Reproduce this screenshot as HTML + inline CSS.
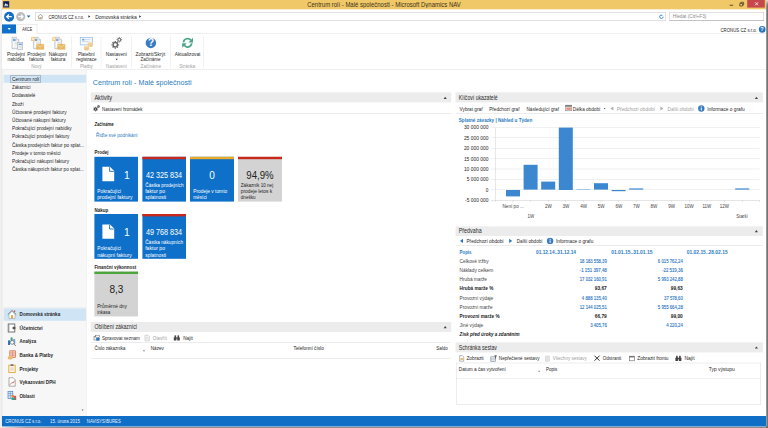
<!DOCTYPE html>
<html lang="cs"><head><meta charset="utf-8"><title>Centrum rolí - Malé společnosti - Microsoft Dynamics NAV</title>
<style>
html,body{margin:0;padding:0;background:#ededed;overflow:hidden;}
body{width:768px;height:428px;position:relative;font-family:"Liberation Sans",sans-serif;}
#w{position:absolute;left:0;top:0;width:1920px;height:1070px;transform:scale(.4);transform-origin:0 0;overflow:hidden;background:linear-gradient(to right,#efefef 0,#efefef 40%,#b9b9b9 100%);}
#w div,#w svg{position:absolute;}
#w .t{white-space:nowrap;line-height:1.15;}
#w svg{overflow:visible;}
</style></head><body><div id="w">
<div style="left:0px;top:0px;width:1920px;height:1070px;background:#f0f0f0;"></div>
<div style="left:3.5px;top:0px;width:2px;height:1066px;background:#e2e2e2;"></div>
<div style="left:1915px;top:0px;width:5px;height:1070px;background:linear-gradient(to right,#a6a6a6,#646464);"></div>
<div style="left:1915px;top:0px;width:5px;height:12.5px;background:linear-gradient(to bottom,#e0e0e0,rgba(224,224,224,0));"></div>
<div style="left:7.5px;top:1065.5px;width:1907.5px;height:4.5px;background:linear-gradient(to right,#e4e4e4 0,#a0a0a0 3%,#8c8c8c 8%,#8c8c8c 100%);"></div>
<div style="left:1915px;top:1065px;width:5px;height:5px;background:#707070;"></div>
<div style="left:5px;top:0px;width:1910px;height:1065.5px;background:#fff;"></div>
<div style="left:5px;top:0px;width:1910px;height:23px;background:#f1c867;"></div>
<div class="t" style="font-size: 16px; color: rgb(58, 51, 32); left: 710px; width: 500px; text-align: center; transform-origin: 50% 50%; top: 3px; transform: scaleX(0.933);"><span>Centrum rolí - Malé společnosti - Microsoft Dynamics NAV</span></div>
<svg style="left:7.75px;top:3.25px;width:15px;height:15.75px" viewBox="0 0 6 6.3"><rect x="0" y="0" width="6" height="6.3" fill="#0d215c"></rect><path d="M0.9 4.6 L2.4 1.9 L3.2 3.3 L3.9 2.6 L5.2 4.6 Z" fill="#e9edf6"></path><rect x="0.9" y="4.7" width="4.3" height="0.5" fill="#8fa0c8"></rect></svg>
<div style="left:1868.25px;top:0px;width:44px;height:19.25px;background:#c7484c;"></div>
<svg style="left:1886.5px;top:4.75px;width:9px;height:9px" viewBox="0 0 3.6 3.6"><path d="M0.3 0.3 L3.3 3.3 M3.3 0.3 L0.3 3.3" stroke="#fff" stroke-width="0.8" fill="none"></path></svg>
<svg style="left:1848.25px;top:3.75px;width:12.5px;height:12.5px" viewBox="0 0 5 5"><path d="M0.6 1.8 H3.4 V4.4 H0.6 Z M1.6 1.8 V0.7 H4.4 V3.3 H3.4" stroke="#3a3320" stroke-width="0.7" fill="none"></path></svg>
<div style="left:1824px;top:11.5px;width:9px;height:2.5px;background:#3a3320;"></div>
<div style="left:5px;top:23px;width:1910px;height:1.25px;background:#f7e7b8;"></div>
<svg style="left:10px;top:28.5px;width:25.5px;height:25.5px" viewBox="0 0 10.2 10.2"><circle cx="5.1" cy="5.1" r="5" fill="#136bc4"></circle><path d="M7.8 5.1 H2.8 M4.9 2.9 L2.7 5.1 L4.9 7.3" stroke="#fff" stroke-width="1.3" fill="none"></path></svg>
<svg style="left:39.5px;top:29.5px;width:23.5px;height:23.5px" viewBox="0 0 9.4 9.4"><circle cx="4.7" cy="4.7" r="4.6" fill="#bdbdbd"></circle><path d="M2.2 4.7 H6.9 M5 2.7 L7 4.7 L5 6.7" stroke="#fff" stroke-width="1.2" fill="none"></path></svg>
<svg style="left:67px;top:38.5px;width:9px;height:6px" viewBox="0 0 3.6 2.4"><path d="M0 0 H3.6 L1.8 2.2 Z" fill="#136bc4"></path></svg>
<div style="left:88.25px;top:31px;width:1576px;height:20.5px;background:#fff;"></div>
<div style="left:88.25px;top:31px;width:1576px;height:1.12px;background:#b4b4b4;"></div>
<div style="left:88.25px;top:50.38px;width:1576px;height:1.12px;background:#b4b4b4;"></div>
<div style="left:88.25px;top:31px;width:1.12px;height:20.5px;background:#b4b4b4;"></div>
<div style="left:1663.12px;top:31px;width:1.12px;height:20.5px;background:#b4b4b4;"></div>
<svg style="left:94px;top:34px;width:14px;height:14px" viewBox="0 0 5.6 5.6"><path d="M0.4 3 L2.8 0.6 L5.2 3 M1.1 2.8 V5.2 H4.5 V2.8" stroke="#777" stroke-width="0.7" fill="#fff"></path><rect x="2.2" y="3.4" width="1.2" height="1.8" fill="#e8a33a"></rect></svg>
<div class="t" style="font-size: 13px; color: rgb(38, 38, 38); left: 120.75px; transform-origin: 0px 50%; top: 36px; transform: scaleX(0.818);"><span>CRONUS CZ s.r.o.</span></div>
<svg style="left:221.25px;top:38.25px;width:5.5px;height:6.5px" viewBox="0 0 2.2 2.6"><path d="M0 0 L2 1.3 L0 2.6 Z" fill="#333"></path></svg>
<div class="t" style="font-size: 13px; color: rgb(38, 38, 38); left: 237.5px; transform-origin: 0px 50%; top: 36px; transform: scaleX(0.966);"><span>Domovská stránka</span></div>
<svg style="left:348.25px;top:38.25px;width:5.5px;height:6.5px" viewBox="0 0 2.2 2.6"><path d="M0 0 L2 1.3 L0 2.6 Z" fill="#333"></path></svg>
<svg style="left:1648px;top:35.5px;width:11.5px;height:11.5px" viewBox="0 0 4.6 4.6"><path d="M3.9 2.3 A1.7 1.7 0 1 1 2.3 0.7" stroke="#3a7fc9" stroke-width="0.9" fill="none"></path><path d="M2.1 0 L3.6 0.8 L2.1 1.7 Z" fill="#3a7fc9"></path></svg>
<div style="left:1673.5px;top:30px;width:236.5px;height:21.5px;background:#fff;"></div>
<div style="left:1673.5px;top:30px;width:236.5px;height:1.25px;background:#b4b4b4;"></div>
<div style="left:1673.5px;top:50.25px;width:236.5px;height:1.25px;background:#b4b4b4;"></div>
<div style="left:1673.5px;top:30px;width:1.25px;height:21.5px;background:#b4b4b4;"></div>
<div style="left:1908.75px;top:30px;width:1.25px;height:21.5px;background:#b4b4b4;"></div>
<div class="t" style="font-size: 13px; color: rgb(138, 138, 138); left: 1682px; transform-origin: 0px 50%; top: 34px; transform: scaleX(0.905);"><span>Hledat (Ctrl+F3)</span></div>
<div style="left:5px;top:60.5px;width:35px;height:23.5px;background:#0e70c8;"></div>
<svg style="left:19px;top:69.75px;width:8px;height:5.5px" viewBox="0 0 3.2 2.2"><path d="M0 0 H3.2 L1.6 2 Z" fill="#fff"></path></svg>
<div style="left:5px;top:83.5px;width:1910px;height:1.25px;background:#d4d4d4;"></div>
<div style="left:41.5px;top:61px;width:52px;height:24px;background:#fff;"></div>
<div style="left:41.5px;top:61px;width:52px;height:1.12px;background:#d0d0d0;"></div>
<div style="left:41.5px;top:83.88px;width:52px;height:1.12px;background:#d0d0d0;"></div>
<div style="left:41.5px;top:61px;width:1.12px;height:24px;background:#d0d0d0;"></div>
<div style="left:92.38px;top:61px;width:1.12px;height:24px;background:#d0d0d0;"></div>
<div style="left:42.62px;top:83px;width:49.75px;height:2.25px;background:#fff;"></div>
<div class="t" style="font-size: 13px; color: rgb(34, 34, 34); left: -182.5px; width: 500px; text-align: center; transform-origin: 50% 50%; top: 66px; transform: scaleX(0.692);"><span>AKCE</span></div>
<div class="t" style="font-size: 13px; color: rgb(38, 38, 38); left: 1391.5px; width: 500px; text-align: right; transform-origin: 100% 50%; top: 69px; transform: scaleX(0.834);"><span>CRONUS CZ s.r.o.</span></div>
<svg style="left:1896.5px;top:65px;width:17px;height:17px" viewBox="0 0 6.8 6.8"><circle cx="3.4" cy="3.4" r="3.3" fill="#2c74c0"></circle></svg>
<div class="t" style="font-size:14px;color:#fff;font-weight:bold;left:1655px;width:500px;text-align:center;transform-origin:50% 50%;top:64px;transform:scaleX(1);"><span>?</span></div>
<div style="left:5px;top:173.75px;width:1910px;height:1.25px;background:#d6d6d6;"></div>
<div style="left:178px;top:91.25px;width:1px;height:77.5px;background:#dcdcdc;"></div>
<div style="left:251.5px;top:91.25px;width:1px;height:77.5px;background:#dcdcdc;"></div>
<div style="left:328.25px;top:91.25px;width:1px;height:77.5px;background:#dcdcdc;"></div>
<div style="left:425px;top:91.25px;width:1px;height:77.5px;background:#dcdcdc;"></div>
<div style="left:509.25px;top:91.25px;width:1px;height:77.5px;background:#dcdcdc;"></div>
<div class="t" style="font-size: 12px; color: rgb(31, 31, 31); left: -210.5px; width: 500px; text-align: center; transform-origin: 50% 50%; top: 130px; transform: scaleX(1.018);"><span>Prodejní</span></div>
<div class="t" style="font-size: 12px; color: rgb(31, 31, 31); left: -210.5px; width: 500px; text-align: center; transform-origin: 50% 50%; top: 142px; transform: scaleX(0.995);"><span>nabídka</span></div>
<div class="t" style="font-size: 12px; color: rgb(31, 31, 31); left: -158.75px; width: 500px; text-align: center; transform-origin: 50% 50%; top: 130px; transform: scaleX(1.018);"><span>Prodejní</span></div>
<div class="t" style="font-size: 12px; color: rgb(31, 31, 31); left: -158.75px; width: 500px; text-align: center; transform-origin: 50% 50%; top: 142px; transform: scaleX(0.995);"><span>faktura</span></div>
<div class="t" style="font-size: 12px; color: rgb(31, 31, 31); left: -105px; width: 500px; text-align: center; transform-origin: 50% 50%; top: 130px; transform: scaleX(1.035);"><span>Nákupní</span></div>
<div class="t" style="font-size: 12px; color: rgb(31, 31, 31); left: -105px; width: 500px; text-align: center; transform-origin: 50% 50%; top: 142px; transform: scaleX(0.995);"><span>faktura</span></div>
<div class="t" style="font-size: 12px; color: rgb(31, 31, 31); left: -34.5px; width: 500px; text-align: center; transform-origin: 50% 50%; top: 130px; transform: scaleX(0.965);"><span>Platební</span></div>
<div class="t" style="font-size: 12px; color: rgb(31, 31, 31); left: -34.5px; width: 500px; text-align: center; transform-origin: 50% 50%; top: 142px; transform: scaleX(0.968);"><span>registrace</span></div>
<div class="t" style="font-size: 12px; color: rgb(31, 31, 31); left: 41px; width: 500px; text-align: center; transform-origin: 50% 50%; top: 130px; transform: scaleX(0.976);"><span>Nastavení</span></div>
<svg style="left:288.5px;top:146.5px;width:5.5px;height:4px" viewBox="0 0 2.2 1.6"><path d="M0 0 H2.2 L1.1 1.4 Z" fill="#444"></path></svg>
<div class="t" style="font-size: 12px; color: rgb(31, 31, 31); left: 126.25px; width: 500px; text-align: center; transform-origin: 50% 50%; top: 130px; transform: scaleX(1.007);"><span>Zobrazit/Skrýt</span></div>
<div class="t" style="font-size: 12px; color: rgb(31, 31, 31); left: 126.25px; width: 500px; text-align: center; transform-origin: 50% 50%; top: 142px; transform: scaleX(0.937);"><span>Začínáme</span></div>
<div class="t" style="font-size: 12px; color: rgb(31, 31, 31); left: 218.75px; width: 500px; text-align: center; transform-origin: 50% 50%; top: 130px; transform: scaleX(0.989);"><span>Aktualizovat</span></div>
<div class="t" style="font-size: 12px; color: rgb(162, 162, 162); left: -158.75px; width: 500px; text-align: center; transform-origin: 50% 50%; top: 160px; transform: scaleX(0.96);"><span>Nový</span></div>
<div class="t" style="font-size: 12px; color: rgb(162, 162, 162); left: -34px; width: 500px; text-align: center; transform-origin: 50% 50%; top: 160px; transform: scaleX(0.974);"><span>Platby</span></div>
<div class="t" style="font-size: 12px; color: rgb(162, 162, 162); left: 41px; width: 500px; text-align: center; transform-origin: 50% 50%; top: 160px; transform: scaleX(0.953);"><span>Nastavení</span></div>
<div class="t" style="font-size: 12px; color: rgb(162, 162, 162); left: 126.75px; width: 500px; text-align: center; transform-origin: 50% 50%; top: 160px; transform: scaleX(0.956);"><span>Začínáme</span></div>
<div class="t" style="font-size: 12px; color: rgb(162, 162, 162); left: 218.25px; width: 500px; text-align: center; transform-origin: 50% 50%; top: 160px; transform: scaleX(0.967);"><span>Stránka</span></div>
<svg style="left:22px;top:91.5px;width:36px;height:33.75px" viewBox="-2 0 14.4 13.5"><path d="M1.2 0.5 H5.6 L8 2.9 V11.9 H1.2 Z" fill="#f1f2f4" stroke="#a4abb3" stroke-width="0.6"></path><path d="M5.6 0.5 V2.9 H8" fill="#fff" stroke="#a4abb3" stroke-width="0.5"></path><rect x="2.2" y="2" width="2.6" height="2.2" fill="#6fa5dc"></rect><rect x="2.4" y="5.2" width="0.9" height="5" fill="#fff"></rect><rect x="4" y="5.6" width="3" height="0.4" fill="#c3cad2"></rect><rect x="4" y="7" width="3" height="0.4" fill="#c3cad2"></rect><rect x="6.9" y="5.8" width="5" height="7" fill="#f4f5f7" stroke="#a4abb3" stroke-width="0.6"></rect><rect x="7.7" y="6.8" width="3.4" height="1.5" fill="#6fa5dc"></rect><rect x="7.7" y="9.4" width="3.4" height="0.5" fill="#c3cad2"></rect><rect x="7.7" y="10.8" width="3.4" height="0.5" fill="#c3cad2"></rect></svg>
<svg style="left:75.75px;top:91.5px;width:36px;height:33.75px" viewBox="-2 0 14.4 13.5"><path d="M1.2 0.5 H5.6 L8 2.9 V11.9 H1.2 Z" fill="#f1f2f4" stroke="#a4abb3" stroke-width="0.6"></path><path d="M5.6 0.5 V2.9 H8" fill="#fff" stroke="#a4abb3" stroke-width="0.5"></path><rect x="2.2" y="2" width="2.6" height="2.2" fill="#6fa5dc"></rect><rect x="2.4" y="5.2" width="0.9" height="5" fill="#fff"></rect><rect x="4" y="5.6" width="3" height="0.4" fill="#c3cad2"></rect><rect x="4" y="7" width="3" height="0.4" fill="#c3cad2"></rect><rect x="-1.4" y="0.3" width="4.1" height="3.9" fill="#f1cd8e"></rect><rect x="-0.2" y="1.2" width="1.6" height="2.0" fill="#fbeed4"></rect><rect x="3.8" y="7.1" width="7.9" height="5.7" fill="#e8b863"></rect><path d="M3.8 7.3 L7.75 10.4 L11.7 7.3" stroke="#f7e2ba" stroke-width="0.7" fill="none"></path></svg>
<svg style="left:129px;top:91.5px;width:36px;height:33.75px" viewBox="-2 0 14.4 13.5"><path d="M1.2 0.5 H5.6 L8 2.9 V11.9 H1.2 Z" fill="#f1f2f4" stroke="#a4abb3" stroke-width="0.6"></path><path d="M5.6 0.5 V2.9 H8" fill="#fff" stroke="#a4abb3" stroke-width="0.5"></path><rect x="2.2" y="2" width="2.6" height="2.2" fill="#6fa5dc"></rect><rect x="2.4" y="5.2" width="0.9" height="5" fill="#fff"></rect><rect x="4" y="5.6" width="3" height="0.4" fill="#c3cad2"></rect><rect x="4" y="7" width="3" height="0.4" fill="#c3cad2"></rect><rect x="-1.4" y="0.3" width="4.1" height="3.9" fill="#f1cd8e"></rect><rect x="-0.2" y="1.2" width="1.6" height="2.0" fill="#fbeed4"></rect><rect x="3.8" y="7.1" width="7.9" height="5.7" fill="#e8b863"></rect><path d="M3.8 7.3 L7.75 10.4 L11.7 7.3" stroke="#f7e2ba" stroke-width="0.7" fill="none"></path></svg>
<svg style="left:199px;top:91.5px;width:35px;height:35px" viewBox="0 0 14 14"><rect x="0.7" y="0.7" width="12.2" height="7.4" fill="#f3f7fc" stroke="#a9c8ec" stroke-width="0.9"></rect><rect x="2.6" y="2" width="2.2" height="1.7" fill="#6fa5dc"></rect><rect x="5.4" y="2.6" width="5.6" height="0.5" fill="#b5c3d2"></rect><rect x="2.6" y="4.6" width="6.4" height="0.5" fill="#b5c3d2"></rect><rect x="8.2" y="5.6" width="4.8" height="3.8" fill="#f0cf97"></rect><ellipse cx="10.6" cy="5.6" rx="2.4" ry="0.9" fill="#f7e3bd"></ellipse><ellipse cx="10.6" cy="9.4" rx="2.4" ry="0.9" fill="#f0cf97"></ellipse><rect x="4.6" y="9.6" width="4.8" height="3.2" fill="#efc988"></rect><ellipse cx="7" cy="9.6" rx="2.4" ry="0.9" fill="#f6dfb4"></ellipse><ellipse cx="7" cy="12.8" rx="2.4" ry="0.9" fill="#efc988"></ellipse></svg>
<svg style="left:273.5px;top:91px;width:35px;height:35px" viewBox="0 0 14 14"><circle cx="5.7" cy="8.4" r="2.2" fill="none" stroke="#6b6b6b" stroke-width="1.5"></circle><line x1="8.55" y1="8.40" x2="9.55" y2="8.40" stroke="#6b6b6b" stroke-width="1.35"></line><line x1="7.72" y1="10.42" x2="8.42" y2="11.12" stroke="#6b6b6b" stroke-width="1.35"></line><line x1="5.70" y1="11.25" x2="5.70" y2="12.25" stroke="#6b6b6b" stroke-width="1.35"></line><line x1="3.68" y1="10.42" x2="2.98" y2="11.12" stroke="#6b6b6b" stroke-width="1.35"></line><line x1="2.85" y1="8.40" x2="1.85" y2="8.40" stroke="#6b6b6b" stroke-width="1.35"></line><line x1="3.68" y1="6.38" x2="2.98" y2="5.68" stroke="#6b6b6b" stroke-width="1.35"></line><line x1="5.70" y1="5.55" x2="5.70" y2="4.55" stroke="#6b6b6b" stroke-width="1.35"></line><line x1="7.72" y1="6.38" x2="8.42" y2="5.68" stroke="#6b6b6b" stroke-width="1.35"></line><circle cx="9.7" cy="3.3" r="1.5" fill="none" stroke="#6b6b6b" stroke-width="1.1"></circle><line x1="11.65" y1="3.30" x2="12.45" y2="3.30" stroke="#6b6b6b" stroke-width="0.99"></line><line x1="11.08" y1="4.68" x2="11.64" y2="5.24" stroke="#6b6b6b" stroke-width="0.99"></line><line x1="9.70" y1="5.25" x2="9.70" y2="6.05" stroke="#6b6b6b" stroke-width="0.99"></line><line x1="8.32" y1="4.68" x2="7.76" y2="5.24" stroke="#6b6b6b" stroke-width="0.99"></line><line x1="7.75" y1="3.30" x2="6.95" y2="3.30" stroke="#6b6b6b" stroke-width="0.99"></line><line x1="8.32" y1="1.92" x2="7.76" y2="1.36" stroke="#6b6b6b" stroke-width="0.99"></line><line x1="9.70" y1="1.35" x2="9.70" y2="0.55" stroke="#6b6b6b" stroke-width="0.99"></line><line x1="11.08" y1="1.92" x2="11.64" y2="1.36" stroke="#6b6b6b" stroke-width="0.99"></line></svg>
<svg style="left:364.25px;top:93.75px;width:26.5px;height:26.5px" viewBox="0 0 10.6 10.6"><circle cx="5.3" cy="5.3" r="5.25" fill="#3a7cc3"></circle></svg>
<div class="t" style="font-size:25px;color:#fff;font-weight:bold;left:127.5px;width:500px;text-align:center;transform-origin:50% 50%;top:92px;transform:scaleX(1);"><span>?</span></div>
<svg style="left:453.5px;top:92px;width:30px;height:30px" viewBox="0 0 12 12"><path d="M1.9 5.6 A4.1 4.1 0 0 1 9.3 3.5" stroke="#49a585" stroke-width="1.7" fill="none"></path><path d="M10.1 6.4 A4.1 4.1 0 0 1 2.7 8.5" stroke="#49a585" stroke-width="1.7" fill="none"></path><path d="M11.4 1.0 V5.6 H6.8 Z" fill="#49a585"></path><path d="M0.6 11.0 V6.4 H5.2 Z" fill="#49a585"></path></svg>
<div style="left:6px;top:175px;width:209.75px;height:865px;background:#f7f7f7;"></div>
<div style="left:6px;top:175px;width:1px;height:865px;background:#dedede;"></div>
<div style="left:215.5px;top:175px;width:1px;height:865px;background:#e6e6e6;"></div>
<div style="left:8.5px;top:186.75px;width:206px;height:20.25px;background:#cfe5f6;"></div>
<div style="left:26px;top:188.88px;width:75.5px;height:1px;background:#777;"></div>
<div style="left:26px;top:205.12px;width:75.5px;height:1px;background:#777;"></div>
<div style="left:26px;top:188.88px;width:1px;height:17.25px;background:#777;"></div>
<div style="left:100.5px;top:188.88px;width:1px;height:17.25px;background:#777;"></div>
<div class="t" style="font-size: 13px; color: rgb(34, 34, 34); left: 29.5px; transform-origin: 0px 50%; top: 191px; transform: scaleX(0.958);"><span>Centrum rolí</span></div>
<div class="t" style="font-size: 13px; color: rgb(38, 38, 38); left: 29.5px; transform-origin: 0px 50%; top: 211px; transform: scaleX(0.831);"><span>Zákazníci</span></div>
<div class="t" style="font-size: 13px; color: rgb(38, 38, 38); left: 29.5px; transform-origin: 0px 50%; top: 231px; transform: scaleX(0.889);"><span>Dodavatelé</span></div>
<div class="t" style="font-size: 13px; color: rgb(38, 38, 38); left: 29.5px; transform-origin: 0px 50%; top: 254px; transform: scaleX(0.9);"><span>Zboží</span></div>
<div class="t" style="font-size: 13px; color: rgb(38, 38, 38); left: 29.5px; transform-origin: 0px 50%; top: 274px; transform: scaleX(0.921);"><span>Účtované prodejní faktury</span></div>
<div class="t" style="font-size: 13px; color: rgb(38, 38, 38); left: 29.5px; transform-origin: 0px 50%; top: 294px; transform: scaleX(0.912);"><span>Účtované nákupní faktury</span></div>
<div class="t" style="font-size: 13px; color: rgb(38, 38, 38); left: 29.5px; transform-origin: 0px 50%; top: 314px; transform: scaleX(0.91);"><span>Pokračující prodejní nabídky</span></div>
<div class="t" style="font-size: 13px; color: rgb(38, 38, 38); left: 29.5px; transform-origin: 0px 50%; top: 334px; transform: scaleX(0.911);"><span>Pokračující prodejní faktury</span></div>
<div class="t" style="font-size: 13px; color: rgb(38, 38, 38); left: 29.5px; transform-origin: 0px 50%; top: 356px; transform: scaleX(0.898);"><span>Částka prodejních faktur po splat...</span></div>
<div class="t" style="font-size: 13px; color: rgb(38, 38, 38); left: 29.5px; transform-origin: 0px 50%; top: 376px; transform: scaleX(0.919);"><span>Prodeje v tomto měsíci</span></div>
<div class="t" style="font-size: 13px; color: rgb(38, 38, 38); left: 29.5px; transform-origin: 0px 50%; top: 396px; transform: scaleX(0.909);"><span>Pokračující nákupní faktury</span></div>
<div class="t" style="font-size: 13px; color: rgb(38, 38, 38); left: 29.5px; transform-origin: 0px 50%; top: 416px; transform: scaleX(0.897);"><span>Částka nákupních faktur po splat...</span></div>
<div style="left:8.5px;top:767.5px;width:206px;height:1px;background:#e3e3e3;"></div>
<div style="left:8.5px;top:771px;width:206px;height:30.75px;background:#cfe5f6;"></div>
<div class="t" style="font-size: 13px; color: rgb(31, 31, 31); font-weight: bold; left: 49.25px; transform-origin: 0px 50%; top: 779px; transform: scaleX(0.878);"><span>Domovská stránka</span></div>
<div class="t" style="font-size: 13px; color: rgb(31, 31, 31); font-weight: bold; left: 49.25px; transform-origin: 0px 50%; top: 814px; transform: scaleX(0.925);"><span>Účetnictví</span></div>
<div class="t" style="font-size: 13px; color: rgb(31, 31, 31); font-weight: bold; left: 49.25px; transform-origin: 0px 50%; top: 846px; transform: scaleX(0.845);"><span>Analýza</span></div>
<div class="t" style="font-size: 13px; color: rgb(31, 31, 31); font-weight: bold; left: 49.25px; transform-origin: 0px 50%; top: 881px; transform: scaleX(0.882);"><span>Banka &amp; Platby</span></div>
<div class="t" style="font-size: 13px; color: rgb(31, 31, 31); font-weight: bold; left: 49.25px; transform-origin: 0px 50%; top: 916px; transform: scaleX(0.906);"><span>Projekty</span></div>
<div class="t" style="font-size: 13px; color: rgb(31, 31, 31); font-weight: bold; left: 49.25px; transform-origin: 0px 50%; top: 949px; transform: scaleX(0.888);"><span>Vykazování DPH</span></div>
<div class="t" style="font-size: 13px; color: rgb(31, 31, 31); font-weight: bold; left: 49.25px; transform-origin: 0px 50%; top: 984px; transform: scaleX(0.862);"><span>Oblasti</span></div>
<svg style="left:18px;top:773.75px;width:24px;height:24px" viewBox="0 0 9.6 9.6"><path d="M0.6 5 L4.8 0.9 L9 5" stroke="#6b6b6b" stroke-width="0.9" fill="none"></path><path d="M1.8 4.6 L4.8 1.8 L7.8 4.6 V9 H1.8 Z" fill="#fff" stroke="#8a8a8a" stroke-width="0.5"></path><rect x="3.8" y="5.6" width="2" height="3.4" fill="#eda53b"></rect><rect x="6.8" y="0.8" width="1.2" height="1.6" fill="#d9534f"></rect></svg>
<svg style="left:18px;top:807.6px;width:24px;height:24px" viewBox="0 0 9.6 9.6"><rect x="1" y="0.8" width="6.6" height="8" fill="#fff" stroke="#555" stroke-width="0.8"></rect><rect x="5.4" y="3.6" width="2.8" height="2.4" fill="#555"></rect><rect x="2" y="2" width="0.6" height="5.6" fill="#bbb"></rect></svg>
<svg style="left:18px;top:841.45px;width:24px;height:24px" viewBox="0 0 9.6 9.6"><rect x="0.8" y="4" width="2" height="4.6" fill="#2c74c0"></rect><rect x="3.4" y="1" width="2" height="4" fill="#3da27c"></rect><rect x="6" y="2.6" width="2" height="5" fill="#7aa7d8"></rect><circle cx="5" cy="6" r="1.9" fill="#fff" stroke="#666" stroke-width="0.7"></circle><path d="M6.4 7.4 L8.6 9.4" stroke="#666" stroke-width="0.9"></path></svg>
<svg style="left:18px;top:875.3px;width:24px;height:24px" viewBox="0 0 9.6 9.6"><rect x="2.6" y="0.8" width="5.6" height="6.6" fill="#f6d6c6" stroke="#d9674a" stroke-width="0.7"></rect><path d="M2.6 3 H8.2 M2.6 5.2 H8.2 M5.4 0.8 V7.4" stroke="#d9674a" stroke-width="0.5"></path><ellipse cx="3" cy="7" rx="2.4" ry="1" fill="#f1c27a"></ellipse><rect x="0.6" y="7" width="4.8" height="1.4" fill="#ecb765"></rect><ellipse cx="3" cy="8.4" rx="2.4" ry="1" fill="#ecb765"></ellipse></svg>
<svg style="left:18px;top:909.15px;width:24px;height:24px" viewBox="0 0 9.6 9.6"><rect x="1.6" y="1.6" width="6.4" height="7.4" fill="#fbf3dc" stroke="#e2aa3d" stroke-width="0.9"></rect><rect x="3.4" y="0.6" width="2.8" height="1.8" fill="#777"></rect><path d="M3 4.4 H6.6 M3 6.2 H6.6" stroke="#caa" stroke-width="0.5"></path></svg>
<svg style="left:18px;top:943px;width:24px;height:24px" viewBox="0 0 9.6 9.6"><path d="M1.8 0.6 H6 L8 2.6 V9 H1.8 Z" fill="#fff" stroke="#777" stroke-width="0.6"></path><path d="M2.6 7.6 L5 5.2 L5.8 6 L7.4 3.4" stroke="#d9534f" stroke-width="0.8" fill="none"></path></svg>
<svg style="left:18px;top:976.85px;width:24px;height:24px" viewBox="0 0 9.6 9.6"><rect x="0.8" y="0.6" width="4.8" height="7" fill="#dfeaf6" stroke="#4c86c6" stroke-width="0.7"></rect><path d="M0.8 2.8 H5.6 M0.8 5 H5.6 M3.2 0.6 V7.6" stroke="#4c86c6" stroke-width="0.5"></path><rect x="4.4" y="4.2" width="2.4" height="2.4" fill="#e8873a"></rect><rect x="6.8" y="5" width="2.2" height="2.2" fill="#d9534f"></rect><rect x="4.4" y="6.8" width="2.4" height="2.4" fill="#3da27c"></rect><rect x="6.8" y="7.2" width="2.2" height="2" fill="#7a7a7a"></rect></svg>
<svg style="left:203.5px;top:1024px;width:5px;height:4px" viewBox="0 0 2 1.6"><path d="M0 0 H2 L1 1.4 Z" fill="#666"></path></svg>
<div style="left:5px;top:1040px;width:1910px;height:25.5px;background:#0f6ec6;"></div>
<div class="t" style="font-size: 13px; color: rgb(233, 241, 251); left: 12.5px; transform-origin: 0px 50%; top: 1046px; transform: scaleX(0.83);"><span>CRONUS CZ s.r.o.</span></div>
<div class="t" style="font-size: 13px; color: rgb(233, 241, 251); left: 125px; transform-origin: 0px 50%; top: 1046px; transform: scaleX(0.857);"><span>15. února 2015</span></div>
<div class="t" style="font-size: 13px; color: rgb(233, 241, 251); left: 216.5px; transform-origin: 0px 50%; top: 1046px; transform: scaleX(0.819);"><span>NAVISYS\BURES</span></div>
<div class="t" style="font-size: 20px; color: rgb(42, 123, 196); left: 232.25px; transform-origin: 0px 50%; top: 194px; transform: scaleX(0.893);"><span>Centrum rolí - Malé společnosti</span></div>
<div style="left:227px;top:231px;width:900.75px;height:25.25px;background:#ececec;"></div>
<div class="t" style="font-size: 16px; color: rgb(42, 42, 42); left: 235.5px; transform-origin: 0px 50%; top: 236px; transform: scaleX(0.868);"><span>Aktivity</span></div>
<svg style="left:1108.5px;top:241.5px;width:8px;height:5.5px" viewBox="0 0 3.2 2.2"><path d="M0 2.2 H3.2 L1.6 0 Z" fill="#444"></path></svg>
<svg style="left:234px;top:264px;width:16px;height:16px" viewBox="0 0 6.4 6.4"><circle cx="2" cy="3.5" r="1.1" fill="none" stroke="#3c3c3c" stroke-width="1.1"></circle><line x1="3.55" y1="3.50" x2="4.25" y2="3.50" stroke="#3c3c3c" stroke-width="0.99"></line><line x1="3.10" y1="4.60" x2="3.59" y2="5.09" stroke="#3c3c3c" stroke-width="0.99"></line><line x1="2.00" y1="5.05" x2="2.00" y2="5.75" stroke="#3c3c3c" stroke-width="0.99"></line><line x1="0.90" y1="4.60" x2="0.41" y2="5.09" stroke="#3c3c3c" stroke-width="0.99"></line><line x1="0.45" y1="3.50" x2="-0.25" y2="3.50" stroke="#3c3c3c" stroke-width="0.99"></line><line x1="0.90" y1="2.40" x2="0.41" y2="1.91" stroke="#3c3c3c" stroke-width="0.99"></line><line x1="2.00" y1="1.95" x2="2.00" y2="1.25" stroke="#3c3c3c" stroke-width="0.99"></line><line x1="3.10" y1="2.40" x2="3.59" y2="1.91" stroke="#3c3c3c" stroke-width="0.99"></line><circle cx="4.9" cy="0.9" r="0.7" fill="none" stroke="#444" stroke-width="0.8"></circle><line x1="5.90" y1="0.90" x2="6.45" y2="0.90" stroke="#444" stroke-width="0.72"></line><line x1="5.61" y1="1.61" x2="6.00" y2="2.00" stroke="#444" stroke-width="0.72"></line><line x1="4.90" y1="1.90" x2="4.90" y2="2.45" stroke="#444" stroke-width="0.72"></line><line x1="4.19" y1="1.61" x2="3.80" y2="2.00" stroke="#444" stroke-width="0.72"></line><line x1="3.90" y1="0.90" x2="3.35" y2="0.90" stroke="#444" stroke-width="0.72"></line><line x1="4.19" y1="0.19" x2="3.80" y2="-0.20" stroke="#444" stroke-width="0.72"></line><line x1="4.90" y1="-0.10" x2="4.90" y2="-0.65" stroke="#444" stroke-width="0.72"></line><line x1="5.61" y1="0.19" x2="6.00" y2="-0.20" stroke="#444" stroke-width="0.72"></line></svg>
<div class="t" style="font-size: 13px; color: rgb(31, 31, 31); left: 255px; transform-origin: 0px 50%; top: 266px; transform: scaleX(0.842);"><span>Nastavení hromádek</span></div>
<div style="left:227px;top:283.25px;width:900.75px;height:1px;background:#d0d0d0;"></div>
<div class="t" style="font-size: 13px; color: rgb(34, 34, 34); font-weight: bold; font-style: italic; left: 235.5px; transform-origin: 0px 50%; top: 304px; transform: scaleX(0.8);"><span>Začínáme</span></div>
<div class="t" style="font-size: 12px; color: rgb(42, 123, 196); left: 240px; transform-origin: 0px 50%; top: 332px; transform: scaleX(0.98);"><span>Řiďte své podnikání</span></div>
<div class="t" style="font-size: 13px; color: rgb(34, 34, 34); font-weight: bold; left: 235.5px; transform-origin: 0px 50%; top: 374px; transform: scaleX(0.865);"><span>Prodej</span></div>
<div class="t" style="font-size: 13px; color: rgb(34, 34, 34); font-weight: bold; left: 235.5px; transform-origin: 0px 50%; top: 519px; transform: scaleX(0.868);"><span>Nákup</span></div>
<div class="t" style="font-size: 13px; color: rgb(34, 34, 34); font-weight: bold; left: 235.5px; transform-origin: 0px 50%; top: 661px; transform: scaleX(0.856);"><span>Finanční výkonnost</span></div>
<div style="left:235.75px;top:391.5px;width:109.5px;height:112.25px;background:#0e70c8;"></div>
<svg style="left:255.75px;top:417.25px;width:29.5px;height:36px" viewBox="0 0 11.8 14.4"><path d="M0 0 H7.6 L11.8 4.2 V14.4 H0 Z" fill="#fff"></path><path d="M7.2 0.4 V4.6 H11.4" fill="none" stroke="#0e70c8" stroke-width="0.9"></path></svg>
<div class="t" style="font-size:28px;color:#fff;left:66.75px;width:500px;text-align:center;transform-origin:50% 50%;top:422px;transform:scaleX(0.92);"><span>1</span></div>
<div class="t" style="font-size: 12px; color: rgb(255, 255, 255); left: 243px; transform-origin: 0px 50%; top: 472px; transform: scaleX(1.011);"><span>Pokračující</span></div>
<div class="t" style="font-size: 12px; color: rgb(255, 255, 255); left: 243px; transform-origin: 0px 50%; top: 487px; transform: scaleX(1.07);"><span>prodejní faktury</span></div>
<div style="left:355.57px;top:391.5px;width:109.5px;height:112.25px;background:#0e70c8;"></div>
<div style="left:355.57px;top:391.5px;width:109.5px;height:6px;background:#c9281c;"></div>
<div class="t" style="font-size: 22px; color: rgb(255, 255, 255); left: 160.32px; width: 500px; text-align: center; transform-origin: 50% 50%; top: 425px; transform: scaleX(0.822);"><span>42 325 834</span></div>
<div class="t" style="font-size: 12px; color: rgb(255, 255, 255); left: 362.82px; transform-origin: 0px 50%; top: 457px; transform: scaleX(0.992);"><span>Částka prodejních</span></div>
<div class="t" style="font-size: 12px; color: rgb(255, 255, 255); left: 362.82px; transform-origin: 0px 50%; top: 472px; transform: scaleX(1.06);"><span>faktur po</span></div>
<div class="t" style="font-size: 12px; color: rgb(255, 255, 255); left: 362.82px; transform-origin: 0px 50%; top: 487px; transform: scaleX(1.035);"><span>splatnosti</span></div>
<div style="left:475.4px;top:391.5px;width:109.5px;height:112.25px;background:#0e70c8;"></div>
<div style="left:475.4px;top:391.5px;width:109.5px;height:6px;background:#e9a92c;"></div>
<div class="t" style="font-size: 28px; color: rgb(255, 255, 255); left: 280.15px; width: 500px; text-align: center; transform-origin: 50% 50%; top: 422px; transform: scaleX(0.899);"><span>0</span></div>
<div class="t" style="font-size: 12px; color: rgb(255, 255, 255); left: 482.65px; transform-origin: 0px 50%; top: 472px; transform: scaleX(1.011);"><span>Prodeje v tomto</span></div>
<div class="t" style="font-size: 12px; color: rgb(255, 255, 255); left: 482.65px; transform-origin: 0px 50%; top: 487px; transform: scaleX(0.981);"><span>měsíci</span></div>
<div style="left:595.22px;top:391.5px;width:109.5px;height:112.25px;background:#d3d3d3;"></div>
<div style="left:595.22px;top:391.5px;width:109.5px;height:6px;background:#c9281c;"></div>
<div class="t" style="font-size: 28px; color: rgb(34, 34, 34); left: 399.97px; width: 500px; text-align: center; transform-origin: 50% 50%; top: 422px; transform: scaleX(0.863);"><span>94,9%</span></div>
<div class="t" style="font-size: 12px; color: rgb(34, 34, 34); left: 602.47px; transform-origin: 0px 50%; top: 457px; transform: scaleX(0.956);"><span>Zákazník 10 nej</span></div>
<div class="t" style="font-size: 12px; color: rgb(34, 34, 34); left: 602.47px; transform-origin: 0px 50%; top: 472px; transform: scaleX(1.006);"><span>prodeje letos k</span></div>
<div class="t" style="font-size: 12px; color: rgb(34, 34, 34); left: 602.47px; transform-origin: 0px 50%; top: 487px; transform: scaleX(0.956);"><span>dnešku</span></div>
<div style="left:235.75px;top:535px;width:109.5px;height:112.25px;background:#0e70c8;"></div>
<svg style="left:255.75px;top:560.75px;width:29.5px;height:36px" viewBox="0 0 11.8 14.4"><path d="M0 0 H7.6 L11.8 4.2 V14.4 H0 Z" fill="#fff"></path><path d="M7.2 0.4 V4.6 H11.4" fill="none" stroke="#0e70c8" stroke-width="0.9"></path></svg>
<div class="t" style="font-size:28px;color:#fff;left:66.75px;width:500px;text-align:center;transform-origin:50% 50%;top:565px;transform:scaleX(0.92);"><span>1</span></div>
<div class="t" style="font-size: 12px; color: rgb(255, 255, 255); left: 243px; transform-origin: 0px 50%; top: 615px; transform: scaleX(1.011);"><span>Pokračující</span></div>
<div class="t" style="font-size: 12px; color: rgb(255, 255, 255); left: 243px; transform-origin: 0px 50%; top: 632px; transform: scaleX(1.054);"><span>nákupní faktury</span></div>
<div style="left:355.57px;top:535px;width:109.5px;height:112.25px;background:#0e70c8;"></div>
<div style="left:355.57px;top:535px;width:109.5px;height:6px;background:#c9281c;"></div>
<div class="t" style="font-size: 22px; color: rgb(255, 255, 255); left: 160.32px; width: 500px; text-align: center; transform-origin: 50% 50%; top: 567px; transform: scaleX(0.822);"><span>49 768 834</span></div>
<div class="t" style="font-size: 12px; color: rgb(255, 255, 255); left: 362.82px; transform-origin: 0px 50%; top: 600px; transform: scaleX(0.984);"><span>Částka nákupních</span></div>
<div class="t" style="font-size: 12px; color: rgb(255, 255, 255); left: 362.82px; transform-origin: 0px 50%; top: 615px; transform: scaleX(1.06);"><span>faktur po</span></div>
<div class="t" style="font-size: 12px; color: rgb(255, 255, 255); left: 362.82px; transform-origin: 0px 50%; top: 632px; transform: scaleX(1.035);"><span>splatnosti</span></div>
<div style="left:235.75px;top:678.5px;width:109.5px;height:112.25px;background:#d3d3d3;"></div>
<div style="left:235.75px;top:678.5px;width:109.5px;height:6px;background:#4ba43c;"></div>
<div class="t" style="font-size: 28px; color: rgb(34, 34, 34); left: 40.5px; width: 500px; text-align: center; transform-origin: 50% 50%; top: 707px; transform: scaleX(0.899);"><span>8,3</span></div>
<div class="t" style="font-size: 12px; color: rgb(34, 34, 34); left: 243px; transform-origin: 0px 50%; top: 760px; transform: scaleX(0.982);"><span>Průměrné dny</span></div>
<div class="t" style="font-size: 12px; color: rgb(34, 34, 34); left: 243px; transform-origin: 0px 50%; top: 775px; transform: scaleX(0.937);"><span>inkasa</span></div>
<div style="left:227px;top:804.75px;width:900.75px;height:25.25px;background:#ececec;"></div>
<div class="t" style="font-size: 16px; color: rgb(42, 42, 42); left: 235.5px; transform-origin: 0px 50%; top: 808px; transform: scaleX(0.809);"><span>Oblíbení zákazníci</span></div>
<svg style="left:1108.5px;top:815.25px;width:8px;height:5.5px" viewBox="0 0 3.2 2.2"><path d="M0 2.2 H3.2 L1.6 0 Z" fill="#444"></path></svg>
<svg style="left:233.5px;top:837px;width:16px;height:16px" viewBox="0 0 6.4 6.4"><rect x="0.4" y="1.6" width="4.6" height="3.6" fill="#fff" stroke="#666" stroke-width="0.6"></rect><rect x="2" y="0.4" width="4" height="2" fill="#fff" stroke="#666" stroke-width="0.5"></rect><rect x="2.6" y="3" width="3.4" height="2.8" fill="#2c74c0"></rect></svg>
<div class="t" style="font-size: 13px; color: rgb(31, 31, 31); left: 254.5px; transform-origin: 0px 50%; top: 839px; transform: scaleX(0.878);"><span>Spravovat seznam</span></div>
<svg style="left:360.5px;top:837px;width:14px;height:16px" viewBox="0 0 5.6 6.4"><path d="M0.6 0.4 H3.6 L5 1.8 V6 H0.6 Z" fill="#f6f6f6" stroke="#bdbdbd" stroke-width="0.6"></path><path d="M1.6 2.6 H4 M1.6 4 H4" stroke="#c9c9c9" stroke-width="0.5"></path></svg>
<div class="t" style="font-size: 13px; color: rgb(160, 160, 160); left: 382px; transform-origin: 0px 50%; top: 839px; transform: scaleX(0.891);"><span>Otevřít</span></div>
<svg style="left:433.5px;top:837.5px;width:16px;height:14px" viewBox="0 0 6.4 5.6"><rect x="0.2" y="2" width="2.6" height="3.4" rx="0.6" fill="#444"></rect><rect x="3.6" y="2" width="2.6" height="3.4" rx="0.6" fill="#444"></rect><rect x="0.9" y="0.2" width="1.6" height="2.4" fill="#444"></rect><rect x="3.9" y="0.2" width="1.6" height="2.4" fill="#444"></rect><rect x="2.6" y="2.2" width="1.2" height="1.4" fill="#444"></rect></svg>
<div class="t" style="font-size: 13px; color: rgb(31, 31, 31); left: 457.5px; transform-origin: 0px 50%; top: 839px; transform: scaleX(0.898);"><span>Najít</span></div>
<div style="left:227px;top:855.25px;width:898.5px;height:1px;background:#d0d0d0;"></div>
<div class="t" style="font-size: 13px; color: rgb(38, 38, 38); left: 235.5px; transform-origin: 0px 50%; top: 864px; transform: scaleX(0.847);"><span>Číslo zákazníka</span></div>
<svg style="left:357px;top:873.5px;width:6px;height:4px" viewBox="0 0 2.4 1.6"><path d="M0 1.6 H2.4 L1.2 0 Z" fill="#8a8a8a"></path></svg>
<div class="t" style="font-size: 13px; color: rgb(38, 38, 38); left: 376.75px; transform-origin: 0px 50%; top: 864px; transform: scaleX(0.882);"><span>Název</span></div>
<div class="t" style="font-size: 13px; color: rgb(38, 38, 38); left: 733.75px; transform-origin: 0px 50%; top: 864px; transform: scaleX(0.908);"><span>Telefonní číslo</span></div>
<div class="t" style="font-size: 13px; color: rgb(38, 38, 38); left: 618.5px; width: 500px; text-align: right; transform-origin: 100% 50%; top: 864px; transform: scaleX(0.85);"><span>Saldo</span></div>
<div style="left:227px;top:894.75px;width:898.5px;height:1px;background:#d0d0d0;"></div>
<div style="left:1138.5px;top:231px;width:768px;height:25.25px;background:#ececec;"></div>
<div class="t" style="font-size: 16px; color: rgb(42, 42, 42); left: 1147px; transform-origin: 0px 50%; top: 236px; transform: scaleX(0.804);"><span>Klíčoví ukazatelé</span></div>
<svg style="left:1887px;top:241.5px;width:8px;height:5.5px" viewBox="0 0 3.2 2.2"><path d="M0 2.2 H3.2 L1.6 0 Z" fill="#444"></path></svg>
<div class="t" style="font-size: 13px; color: rgb(31, 31, 31); left: 1149.25px; transform-origin: 0px 50%; top: 266px; transform: scaleX(0.907);"><span>Vybrat graf</span></div>
<div class="t" style="font-size: 13px; color: rgb(31, 31, 31); left: 1223.25px; transform-origin: 0px 50%; top: 266px; transform: scaleX(0.896);"><span>Předchozí graf</span></div>
<div class="t" style="font-size: 13px; color: rgb(31, 31, 31); left: 1315.75px; transform-origin: 0px 50%; top: 266px; transform: scaleX(0.902);"><span>Následující graf</span></div>
<svg style="left:1412.5px;top:262.25px;width:17px;height:15.75px" viewBox="0 0 6.8 6.3"><rect x="0.3" y="0.4" width="6.2" height="5.5" fill="#fff" stroke="#8a8a8a" stroke-width="0.6"></rect><rect x="0.3" y="0.4" width="6.2" height="1.5" fill="#6e6e6e"></rect><rect x="1.1" y="2.6" width="4.6" height="2.5" fill="#e58f7c"></rect></svg>
<div class="t" style="font-size: 13px; color: rgb(31, 31, 31); left: 1432.25px; transform-origin: 0px 50%; top: 266px; transform: scaleX(0.897);"><span>Délka období</span></div>
<svg style="left:1509px;top:270px;width:5px;height:3.5px" viewBox="0 0 2 1.4"><path d="M0 0 H2 L1 1.3 Z" fill="#555"></path></svg>
<svg style="left:1525.75px;top:266.25px;width:7.5px;height:10.5px" viewBox="0 0 3 4.2"><path d="M3 0 V4.2 L0 2.1 Z" fill="#b0b0b0"></path></svg>
<div class="t" style="font-size: 13px; color: rgb(160, 160, 160); left: 1541.88px; transform-origin: 0px 50%; top: 266px; transform: scaleX(0.936);"><span>Předchozí období</span></div>
<svg style="left:1650.75px;top:266.25px;width:7.5px;height:10.5px" viewBox="0 0 3 4.2"><path d="M0 0 V4.2 L3 2.1 Z" fill="#b0b0b0"></path></svg>
<div class="t" style="font-size: 13px; color: rgb(160, 160, 160); left: 1668.5px; transform-origin: 0px 50%; top: 266px; transform: scaleX(0.904);"><span>Další období</span></div>
<svg style="left:1745px;top:263px;width:16.5px;height:16.5px" viewBox="0 0 6.6 6.6"><circle cx="3.3" cy="3.3" r="3.2" fill="#3a7cc3"></circle><rect x="2.8" y="2.8" width="1.0" height="2.4" fill="#fff"></rect><rect x="2.8" y="1.2" width="1.0" height="1.0" fill="#fff"></rect></svg>
<div class="t" style="font-size: 13px; color: rgb(31, 31, 31); left: 1767.5px; transform-origin: 0px 50%; top: 266px; transform: scaleX(0.92);"><span>Informace o grafu</span></div>
<div style="left:1138.5px;top:283px;width:768px;height:1px;background:#d0d0d0;"></div>
<div class="t" style="font-size: 12px; color: rgb(42, 123, 196); font-weight: bold; left: 1147px; transform-origin: 0px 50%; top: 295px; transform: scaleX(0.959);"><span>Splatné závazky | Náhled u Týden</span></div>
<div style="left:1228px;top:318px;width:671.25px;height:1px;background:#d9d9d9;"></div>
<div class="t" style="font-size: 12px; color: rgb(38, 38, 38); left: 720.5px; width: 500px; text-align: right; transform-origin: 100% 50%; top: 312px; transform: scaleX(1.02);"><span>30 000 000</span></div>
<div style="left:1228px;top:344px;width:671.25px;height:1px;background:#d9d9d9;"></div>
<div class="t" style="font-size: 12px; color: rgb(38, 38, 38); left: 720.5px; width: 500px; text-align: right; transform-origin: 100% 50%; top: 340px; transform: scaleX(1.02);"><span>25 000 000</span></div>
<div style="left:1228px;top:370px;width:671.25px;height:1px;background:#d9d9d9;"></div>
<div class="t" style="font-size: 12px; color: rgb(38, 38, 38); left: 720.5px; width: 500px; text-align: right; transform-origin: 100% 50%; top: 365px; transform: scaleX(1.02);"><span>20 000 000</span></div>
<div style="left:1228px;top:396px;width:671.25px;height:1px;background:#d9d9d9;"></div>
<div class="t" style="font-size: 12px; color: rgb(38, 38, 38); left: 720.5px; width: 500px; text-align: right; transform-origin: 100% 50%; top: 392px; transform: scaleX(1.02);"><span>15 000 000</span></div>
<div style="left:1228px;top:422px;width:671.25px;height:1px;background:#d9d9d9;"></div>
<div class="t" style="font-size: 12px; color: rgb(38, 38, 38); left: 720.5px; width: 500px; text-align: right; transform-origin: 100% 50%; top: 417px; transform: scaleX(1.02);"><span>10 000 000</span></div>
<div style="left:1228px;top:448px;width:671.25px;height:1px;background:#d9d9d9;"></div>
<div class="t" style="font-size: 12px; color: rgb(38, 38, 38); left: 720.5px; width: 500px; text-align: right; transform-origin: 100% 50%; top: 442px; transform: scaleX(1.011);"><span>5 000 000</span></div>
<div style="left:1228px;top:474px;width:671.25px;height:1px;background:#d9d9d9;"></div>
<div class="t" style="font-size: 12px; color: rgb(38, 38, 38); left: 720.5px; width: 500px; text-align: right; transform-origin: 100% 50%; top: 470px; transform: scaleX(0.972);"><span>0</span></div>
<div style="left:1228px;top:500px;width:671.25px;height:1px;background:#bdbdbd;"></div>
<div class="t" style="font-size: 12px; color: rgb(38, 38, 38); left: 720.5px; width: 500px; text-align: right; transform-origin: 100% 50%; top: 495px; transform: scaleX(1.019);"><span>-5 000 000</span></div>
<div style="left:1238px;top:318.5px;width:1px;height:182px;background:#c4c4c4;"></div>
<div style="left:1282.05px;top:500.5px;width:1px;height:4px;background:#bdbdbd;"></div>
<div style="left:1265.05px;top:474.5px;width:35px;height:16.64px;background:#3b88d1;"></div>
<div class="t" style="font-size: 12px; color: rgb(68, 68, 68); left: 1032.55px; width: 500px; text-align: center; transform-origin: 50% 50%; top: 510px; transform: scaleX(0.966);"><span>Není po ...</span></div>
<div style="left:1326.1px;top:500.5px;width:1px;height:4px;background:#bdbdbd;"></div>
<div style="left:1309.1px;top:412.1px;width:35px;height:62.4px;background:#3b88d1;"></div>
<div class="t" style="font-size: 12px; color: rgb(68, 68, 68); left: 1076.6px; width: 500px; text-align: center; transform-origin: 50% 50%; top: 535px; transform: scaleX(0.917);"><span>1W</span></div>
<div style="left:1370.15px;top:500.5px;width:1px;height:4px;background:#bdbdbd;"></div>
<div style="left:1353.15px;top:454.22px;width:35px;height:20.28px;background:#3b88d1;"></div>
<div class="t" style="font-size: 12px; color: rgb(68, 68, 68); left: 1120.65px; width: 500px; text-align: center; transform-origin: 50% 50%; top: 510px; transform: scaleX(0.944);"><span>2W</span></div>
<div style="left:1414.2px;top:500.5px;width:1px;height:4px;background:#bdbdbd;"></div>
<div style="left:1397.2px;top:318.5px;width:35px;height:156px;background:#3b88d1;"></div>
<div class="t" style="font-size: 12px; color: rgb(68, 68, 68); left: 1164.7px; width: 500px; text-align: center; transform-origin: 50% 50%; top: 510px; transform: scaleX(0.944);"><span>3W</span></div>
<div style="left:1458.25px;top:500.5px;width:1px;height:4px;background:#bdbdbd;"></div>
<div style="left:1441.25px;top:473.88px;width:35px;height:0.62px;background:#3b88d1;"></div>
<div class="t" style="font-size: 12px; color: rgb(68, 68, 68); left: 1208.75px; width: 500px; text-align: center; transform-origin: 50% 50%; top: 510px; transform: scaleX(0.944);"><span>4W</span></div>
<div style="left:1502.3px;top:500.5px;width:1px;height:4px;background:#bdbdbd;"></div>
<div style="left:1485.3px;top:457.86px;width:35px;height:16.64px;background:#3b88d1;"></div>
<div class="t" style="font-size: 12px; color: rgb(68, 68, 68); left: 1252.8px; width: 500px; text-align: center; transform-origin: 50% 50%; top: 510px; transform: scaleX(0.944);"><span>5W</span></div>
<div style="left:1546.35px;top:500.5px;width:1px;height:4px;background:#bdbdbd;"></div>
<div style="left:1529.35px;top:474.5px;width:35px;height:3.64px;background:#3b88d1;"></div>
<div class="t" style="font-size: 12px; color: rgb(68, 68, 68); left: 1296.85px; width: 500px; text-align: center; transform-origin: 50% 50%; top: 510px; transform: scaleX(0.944);"><span>6W</span></div>
<div style="left:1590.4px;top:500.5px;width:1px;height:4px;background:#bdbdbd;"></div>
<div style="left:1573.4px;top:471.38px;width:35px;height:3.12px;background:#3b88d1;"></div>
<div class="t" style="font-size: 12px; color: rgb(68, 68, 68); left: 1340.9px; width: 500px; text-align: center; transform-origin: 50% 50%; top: 510px; transform: scaleX(0.944);"><span>7W</span></div>
<div style="left:1634.45px;top:500.5px;width:1px;height:4px;background:#bdbdbd;"></div>
<div class="t" style="font-size: 12px; color: rgb(68, 68, 68); left: 1384.95px; width: 500px; text-align: center; transform-origin: 50% 50%; top: 510px; transform: scaleX(0.944);"><span>8W</span></div>
<div style="left:1678.5px;top:500.5px;width:1px;height:4px;background:#bdbdbd;"></div>
<div class="t" style="font-size: 12px; color: rgb(68, 68, 68); left: 1429px; width: 500px; text-align: center; transform-origin: 50% 50%; top: 510px; transform: scaleX(0.944);"><span>9W</span></div>
<div style="left:1722.55px;top:500.5px;width:1px;height:4px;background:#bdbdbd;"></div>
<div class="t" style="font-size: 12px; color: rgb(68, 68, 68); left: 1473.05px; width: 500px; text-align: center; transform-origin: 50% 50%; top: 510px; transform: scaleX(0.932);"><span>10W</span></div>
<div style="left:1766.6px;top:500.5px;width:1px;height:4px;background:#bdbdbd;"></div>
<div class="t" style="font-size: 12px; color: rgb(68, 68, 68); left: 1517.1px; width: 500px; text-align: center; transform-origin: 50% 50%; top: 510px; transform: scaleX(0.924);"><span>11W</span></div>
<div style="left:1810.65px;top:500.5px;width:1px;height:4px;background:#bdbdbd;"></div>
<div class="t" style="font-size: 12px; color: rgb(68, 68, 68); left: 1561.15px; width: 500px; text-align: center; transform-origin: 50% 50%; top: 510px; transform: scaleX(0.932);"><span>12W</span></div>
<div style="left:1854.7px;top:500.5px;width:1px;height:4px;background:#bdbdbd;"></div>
<div style="left:1837.7px;top:470.86px;width:35px;height:3.64px;background:#3b88d1;"></div>
<div class="t" style="font-size: 12px; color: rgb(68, 68, 68); left: 1605.2px; width: 500px; text-align: center; transform-origin: 50% 50%; top: 535px; transform: scaleX(0.925);"><span>Starší</span></div>
<div style="left:1238px;top:500.5px;width:1px;height:4px;background:#bdbdbd;"></div>
<div style="left:1898.75px;top:500.5px;width:1px;height:4px;background:#bdbdbd;"></div>
<div style="left:1138.5px;top:565.75px;width:768px;height:24.5px;background:#ececec;"></div>
<div class="t" style="font-size: 16px; color: rgb(42, 42, 42); left: 1146.75px; transform-origin: 0px 50%; top: 568px; transform: scaleX(0.832);"><span>Předvaha</span></div>
<svg style="left:1887px;top:575.25px;width:8px;height:5.5px" viewBox="0 0 3.2 2.2"><path d="M0 2.2 H3.2 L1.6 0 Z" fill="#444"></path></svg>
<svg style="left:1149.75px;top:596.75px;width:7.5px;height:10.5px" viewBox="0 0 3 4.2"><path d="M3 0 V4.2 L0 2.1 Z" fill="#2c74c0"></path></svg>
<div class="t" style="font-size: 13px; color: rgb(31, 31, 31); left: 1165.75px; transform-origin: 0px 50%; top: 596px; transform: scaleX(0.913);"><span>Předchozí období</span></div>
<svg style="left:1273px;top:596.75px;width:7.5px;height:10.5px" viewBox="0 0 3 4.2"><path d="M0 0 V4.2 L3 2.1 Z" fill="#2c74c0"></path></svg>
<div class="t" style="font-size: 13px; color: rgb(31, 31, 31); left: 1292px; transform-origin: 0px 50%; top: 596px; transform: scaleX(0.88);"><span>Další období</span></div>
<svg style="left:1366.75px;top:593.75px;width:16.5px;height:16.5px" viewBox="0 0 6.6 6.6"><circle cx="3.3" cy="3.3" r="3.2" fill="#3a7cc3"></circle><rect x="2.8" y="2.8" width="1.0" height="2.4" fill="#fff"></rect><rect x="2.8" y="1.2" width="1.0" height="1.0" fill="#fff"></rect></svg>
<div class="t" style="font-size: 13px; color: rgb(31, 31, 31); left: 1390px; transform-origin: 0px 50%; top: 596px; transform: scaleX(0.915);"><span>Informace o grafu</span></div>
<div style="left:1138.5px;top:613.5px;width:768px;height:1px;background:#d0d0d0;"></div>
<div class="t" style="font-size: 12px; color: rgb(42, 123, 196); font-weight: bold; left: 1149px; transform-origin: 0px 50%; top: 625px; transform: scaleX(0.911);"><span>Popis</span></div>
<div class="t" style="font-size: 12px; color: rgb(42, 123, 196); font-weight: bold; left: 1339.5px; transform-origin: 0px 50%; top: 625px; transform: scaleX(0.999);"><span>01.12.14..31.12.14</span></div>
<div class="t" style="font-size: 12px; color: rgb(42, 123, 196); font-weight: bold; left: 1528px; transform-origin: 0px 50%; top: 625px; transform: scaleX(1.029);"><span>01.01.15..31.01.15</span></div>
<div class="t" style="font-size: 12px; color: rgb(42, 123, 196); font-weight: bold; left: 1717px; transform-origin: 0px 50%; top: 625px; transform: scaleX(1.019);"><span>01.02.15..28.02.15</span></div>
<div class="t" style="font-size: 13px; color: rgb(68, 68, 68); left: 1149.25px; transform-origin: 0px 50%; top: 646px; transform: scaleX(0.921);"><span>Celkové tržby</span></div>
<div class="t" style="font-size: 13px; color: rgb(31, 116, 196); left: 1017px; width: 500px; text-align: right; transform-origin: 100% 50%; top: 646px; -webkit-text-stroke: 0.3px rgb(31, 116, 196); transform: scaleX(0.813);"><span>18 183 558,39</span></div>
<div class="t" style="font-size: 13px; color: rgb(31, 116, 196); left: 1207px; width: 500px; text-align: right; transform-origin: 100% 50%; top: 646px; -webkit-text-stroke: 0.3px rgb(31, 116, 196); transform: scaleX(0.822);"><span>6 015 762,24</span></div>
<div class="t" style="font-size: 13px; color: rgb(68, 68, 68); left: 1149.25px; transform-origin: 0px 50%; top: 669px; transform: scaleX(0.915);"><span>Náklady celkem</span></div>
<div class="t" style="font-size: 13px; color: rgb(31, 116, 196); left: 1017px; width: 500px; text-align: right; transform-origin: 100% 50%; top: 669px; -webkit-text-stroke: 0.3px rgb(31, 116, 196); transform: scaleX(0.843);"><span>-1 151 397,48</span></div>
<div class="t" style="font-size: 13px; color: rgb(31, 116, 196); left: 1207px; width: 500px; text-align: right; transform-origin: 100% 50%; top: 669px; -webkit-text-stroke: 0.3px rgb(31, 116, 196); transform: scaleX(0.836);"><span>-22 519,36</span></div>
<div class="t" style="font-size: 13px; color: rgb(68, 68, 68); left: 1149.25px; transform-origin: 0px 50%; top: 691px; transform: scaleX(0.912);"><span>Hrubá marže</span></div>
<div class="t" style="font-size: 13px; color: rgb(31, 116, 196); left: 1017px; width: 500px; text-align: right; transform-origin: 100% 50%; top: 691px; -webkit-text-stroke: 0.3px rgb(31, 116, 196); transform: scaleX(0.813);"><span>17 032 160,91</span></div>
<div class="t" style="font-size: 13px; color: rgb(31, 116, 196); left: 1207px; width: 500px; text-align: right; transform-origin: 100% 50%; top: 691px; -webkit-text-stroke: 0.3px rgb(31, 116, 196); transform: scaleX(0.822);"><span>5 993 242,88</span></div>
<div class="t" style="font-size: 13px; color: rgb(34, 34, 34); font-weight: bold; left: 1149.25px; transform-origin: 0px 50%; top: 714px; transform: scaleX(0.9);"><span>Hrubá marže %</span></div>
<div class="t" style="font-size: 13px; color: rgb(34, 34, 34); font-weight: bold; left: 1017px; width: 500px; text-align: right; transform-origin: 100% 50%; top: 714px; transform: scaleX(0.929);"><span>93,67</span></div>
<div class="t" style="font-size: 13px; color: rgb(34, 34, 34); font-weight: bold; left: 1207px; width: 500px; text-align: right; transform-origin: 100% 50%; top: 714px; transform: scaleX(0.929);"><span>99,63</span></div>
<div class="t" style="font-size: 13px; color: rgb(68, 68, 68); left: 1149.25px; transform-origin: 0px 50%; top: 739px; transform: scaleX(0.908);"><span>Provozní výdaje</span></div>
<div class="t" style="font-size: 13px; color: rgb(31, 116, 196); left: 1017px; width: 500px; text-align: right; transform-origin: 100% 50%; top: 739px; -webkit-text-stroke: 0.3px rgb(31, 116, 196); transform: scaleX(0.822);"><span>4 888 135,40</span></div>
<div class="t" style="font-size: 13px; color: rgb(31, 116, 196); left: 1207px; width: 500px; text-align: right; transform-origin: 100% 50%; top: 739px; -webkit-text-stroke: 0.3px rgb(31, 116, 196); transform: scaleX(0.809);"><span>37 578,60</span></div>
<div class="t" style="font-size: 13px; color: rgb(68, 68, 68); left: 1149.25px; transform-origin: 0px 50%; top: 761px; transform: scaleX(0.906);"><span>Provozní marže</span></div>
<div class="t" style="font-size: 13px; color: rgb(31, 116, 196); left: 1017px; width: 500px; text-align: right; transform-origin: 100% 50%; top: 761px; -webkit-text-stroke: 0.3px rgb(31, 116, 196); transform: scaleX(0.813);"><span>12 144 025,51</span></div>
<div class="t" style="font-size: 13px; color: rgb(31, 116, 196); left: 1207px; width: 500px; text-align: right; transform-origin: 100% 50%; top: 761px; -webkit-text-stroke: 0.3px rgb(31, 116, 196); transform: scaleX(0.822);"><span>5 955 664,28</span></div>
<div class="t" style="font-size: 13px; color: rgb(34, 34, 34); font-weight: bold; left: 1149.25px; transform-origin: 0px 50%; top: 784px; transform: scaleX(0.899);"><span>Provozní marže %</span></div>
<div class="t" style="font-size: 13px; color: rgb(34, 34, 34); font-weight: bold; left: 1017px; width: 500px; text-align: right; transform-origin: 100% 50%; top: 784px; transform: scaleX(0.929);"><span>66,79</span></div>
<div class="t" style="font-size: 13px; color: rgb(34, 34, 34); font-weight: bold; left: 1207px; width: 500px; text-align: right; transform-origin: 100% 50%; top: 784px; transform: scaleX(0.929);"><span>99,00</span></div>
<div class="t" style="font-size: 13px; color: rgb(68, 68, 68); left: 1149.25px; transform-origin: 0px 50%; top: 806px; transform: scaleX(0.907);"><span>Jiné výdaje</span></div>
<div class="t" style="font-size: 13px; color: rgb(31, 116, 196); left: 1017px; width: 500px; text-align: right; transform-origin: 100% 50%; top: 806px; -webkit-text-stroke: 0.3px rgb(31, 116, 196); transform: scaleX(0.822);"><span>3 405,76</span></div>
<div class="t" style="font-size: 13px; color: rgb(31, 116, 196); left: 1207px; width: 500px; text-align: right; transform-origin: 100% 50%; top: 806px; -webkit-text-stroke: 0.3px rgb(31, 116, 196); transform: scaleX(0.822);"><span>4 220,24</span></div>
<div class="t" style="font-size: 13px; color: rgb(34, 34, 34); font-weight: bold; font-style: italic; left: 1149.25px; transform-origin: 0px 50%; top: 829px; transform: scaleX(0.876);"><span>Zisk před úroky a zdaněním</span></div>
<div style="left:1138.5px;top:856.25px;width:768px;height:24.75px;background:#ececec;"></div>
<div class="t" style="font-size: 16px; color: rgb(42, 42, 42); left: 1146.75px; transform-origin: 0px 50%; top: 861px; transform: scaleX(0.805);"><span>Schránka sestav</span></div>
<svg style="left:1887px;top:866.25px;width:8px;height:5.5px" viewBox="0 0 3.2 2.2"><path d="M0 2.2 H3.2 L1.6 0 Z" fill="#444"></path></svg>
<svg style="left:1148.25px;top:888px;width:12.5px;height:16px" viewBox="0 0 5 6.4"><path d="M0.5 0.4 H3.2 L4.5 1.7 V6 H0.5 Z" fill="#fff" stroke="#8a8a8a" stroke-width="0.6"></path><rect x="1.4" y="3" width="2.2" height="1.6" fill="#e8a33a"></rect></svg>
<div class="t" style="font-size: 13px; color: rgb(31, 31, 31); left: 1165.75px; transform-origin: 0px 50%; top: 889px; transform: scaleX(0.921);"><span>Zobrazit</span></div>
<svg style="left:1225.5px;top:887.5px;width:16.5px;height:16.5px" viewBox="0 0 6.6 6.6"><rect x="0.4" y="1.6" width="4.6" height="4.6" fill="#e9eef3" stroke="#7d8790" stroke-width="0.6"></rect><path d="M0.4 3.2 H5 M0.4 4.6 H5" stroke="#9aa3ab" stroke-width="0.4"></path><path d="M4 0.6 H6.4 M5.2 0.6 V3.4" stroke="#444" stroke-width="0.8"></path></svg>
<div class="t" style="font-size: 13px; color: rgb(31, 31, 31); left: 1247px; transform-origin: 0px 50%; top: 889px; transform: scaleX(0.886);"><span>Nepřečtené sestavy</span></div>
<svg style="left:1361.5px;top:888.5px;width:12.5px;height:15px" viewBox="0 0 5 6"><rect x="0.4" y="0.4" width="4.2" height="5.2" fill="#e3e3e3" stroke="#cfcfcf" stroke-width="0.5"></rect></svg>
<div class="t" style="font-size: 13px; color: rgb(160, 160, 160); left: 1381.5px; transform-origin: 0px 50%; top: 889px; transform: scaleX(0.871);"><span>Všechny sestavy</span></div>
<svg style="left:1485px;top:888.25px;width:15px;height:15px" viewBox="0 0 6 6"><path d="M0.5 0.5 L5.5 5.5 M5.5 0.5 L0.5 5.5" stroke="#333" stroke-width="1.0"></path></svg>
<div class="t" style="font-size: 13px; color: rgb(31, 31, 31); left: 1507.25px; transform-origin: 0px 50%; top: 889px; transform: scaleX(0.872);"><span>Odstranit</span></div>
<svg style="left:1572.5px;top:889px;width:14px;height:14px" viewBox="0 0 5.6 5.6"><rect x="0.4" y="0.6" width="4.8" height="4.6" fill="#fff" stroke="#666" stroke-width="0.6"></rect><rect x="0.4" y="0.6" width="4.8" height="1.2" fill="#666"></rect></svg>
<div class="t" style="font-size: 13px; color: rgb(31, 31, 31); left: 1593.25px; transform-origin: 0px 50%; top: 889px; transform: scaleX(0.936);"><span>Zobrazit frontu</span></div>
<svg style="left:1688px;top:889px;width:16px;height:14px" viewBox="0 0 6.4 5.6"><rect x="0.2" y="2" width="2.6" height="3.4" rx="0.6" fill="#444"></rect><rect x="3.6" y="2" width="2.6" height="3.4" rx="0.6" fill="#444"></rect><rect x="0.9" y="0.2" width="1.6" height="2.4" fill="#444"></rect><rect x="3.9" y="0.2" width="1.6" height="2.4" fill="#444"></rect><rect x="2.6" y="2.2" width="1.2" height="1.4" fill="#444"></rect></svg>
<div class="t" style="font-size: 13px; color: rgb(31, 31, 31); left: 1710.5px; transform-origin: 0px 50%; top: 889px; transform: scaleX(0.944);"><span>Najít</span></div>
<div style="left:1141px;top:907px;width:761.25px;height:1px;background:#cfcfcf;"></div>
<div style="left:1141px;top:1010px;width:761.25px;height:1px;background:#cfcfcf;"></div>
<div style="left:1141px;top:907px;width:1px;height:104px;background:#cfcfcf;"></div>
<div style="left:1901.25px;top:907px;width:1px;height:104px;background:#cfcfcf;"></div>
<div style="left:1141px;top:946px;width:761.25px;height:1px;background:#dcdcdc;"></div>
<div class="t" style="font-size: 13px; color: rgb(38, 38, 38); left: 1147.25px; transform-origin: 0px 50%; top: 916px; transform: scaleX(0.907);"><span>Datum a čas vytvoření</span></div>
<svg style="left:1345px;top:926.5px;width:6px;height:4px" viewBox="0 0 2.4 1.6"><path d="M0 0 H2.4 L1.2 1.5 Z" fill="#8a8a8a"></path></svg>
<div class="t" style="font-size: 13px; color: rgb(38, 38, 38); left: 1364.75px; transform-origin: 0px 50%; top: 916px; transform: scaleX(0.861);"><span>Popis</span></div>
<div class="t" style="font-size: 13px; color: rgb(38, 38, 38); left: 1771.75px; transform-origin: 0px 50%; top: 916px; transform: scaleX(0.933);"><span>Typ výstupu</span></div>
</div></body></html>
